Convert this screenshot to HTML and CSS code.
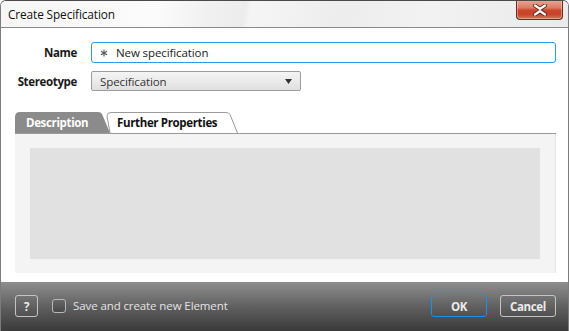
FILE: index.html
```html
<!DOCTYPE html>
<html>
<head>
<meta charset="utf-8">
<link rel="stylesheet" href="styles.css">
</head>
<body>
<div class="window">
  <div class="titlebar">
    <span class="title">Create Specification</span>
    <button class="close" aria-label="Close">
      <svg width="16" height="12" viewBox="0 0 16 12">
        <path d="M3 1.5 L8 5 L13 1.5 M3 10.5 L8 7 L13 10.5" fill="none" stroke="#5a2a22" stroke-width="4" stroke-linecap="round"/>
        <path d="M3 1.5 L8 5 L13 1.5 M3 10.5 L8 7 L13 10.5" fill="none" stroke="#ffffff" stroke-width="2.2" stroke-linecap="round"/>
      </svg>
    </button>
  </div>
  <div class="body">
    <div class="form">
      <label class="label">Name</label>
      <div class="input">
        <svg class="star" width="8" height="8" viewBox="0 0 8 8">
          <path d="M4 0.5 V7.5 M1 2.2 L7 5.8 M7 2.2 L1 5.8" stroke="#555" stroke-width="1.1"/>
        </svg>
        <span>New specification</span>
      </div>
      <label class="label">Stereotype</label>
      <div class="select">
        <span>Specification</span>
        <svg width="7" height="5" viewBox="0 0 7 5"><path d="M0 0 H7 L3.5 5 Z" fill="#333"/></svg>
      </div>
    </div>
    <div class="tabs">
      <div class="tab tab-active">
        <svg class="tab-bg" viewBox="0 0 95 21" preserveAspectRatio="none">
          <path d="M0 21 V5 Q0 0 5 0 H83 Q86 0 87 2 L95 21 Z" fill="#8b8b8b"/>
        </svg>
        <span class="tab-text">Description</span>
      </div>
      <div class="tab tab-idle">
        <svg class="tab-bg" viewBox="0 0 133 21" preserveAspectRatio="none">
          <path d="M5 21 L2 4 Q2 0.5 6 0.5 H121 Q124 0.5 125 2.5 L132.5 21" fill="#ffffff" stroke="#9a9a9a" stroke-width="1"/>
        </svg>
        <span class="tab-text">Further Properties</span>
      </div>
    </div>
    <div class="panel">
      <div class="inner"></div>
    </div>
  </div>
  <div class="footer">
    <button class="btn help">?</button>
    <span class="check"></span>
    <span class="check-label">Save and create new Element</span>
    <div class="spacer"></div>
    <button class="btn ok">OK</button>
    <button class="btn cancel">Cancel</button>
  </div>
</div>
</body>
</html>
```
FILE: styles.css
```css
* { box-sizing: border-box; }
html, body { margin: 0; padding: 0; background: #ffffff; }
body { font-family: "Open Sans", "Noto Sans", sans-serif; font-size: 11.5px; letter-spacing: -0.1px; color: #1a1a1a; }

.window {
  width: 569px;
  height: 331px;
  display: flex;
  flex-direction: column;
  border: 1px solid #7c7c7c;
  border-top-color: #4a4a4a;
  border-bottom: none;
  border-radius: 6px 6px 0 0;
  overflow: hidden;
  background: #fff;
}

.titlebar {
  height: 27px;
  flex: none;
  display: flex;
  align-items: flex-start;
  padding-left: 7px;
  border-bottom: 1px solid #8a8a8a;
  background: linear-gradient(100deg, #f6f6f6 0%, #fbfbfb 28%, #f1f1f1 36%, #ececec 43%, #f5f5f5 44%, #ededed 60%, #f2f2f2 75%, #eaeaea 100%);
}
.title {
  line-height: 26px;
  font-size: 11.8px;
  color: #111;
}
.close {
  margin: -1px 5px 0 auto;
  width: 47px;
  height: 20px;
  padding: 0;
  border: 1px solid #6d2a1e;
  border-top: none;
  border-radius: 0 0 4px 4px;
  background: linear-gradient(#e9a898 0%, #dd7b66 40%, #c9462b 55%, #c5432a 75%, #d8745b 100%);
  display: flex;
  align-items: center;
  justify-content: center;
  box-shadow: inset 0 0 0 1px rgba(255,255,255,0.35);
}
.close svg { display: block; }

.body {
  height: 254px;
  flex: none;
  padding: 14px 12px 0 14px;
  display: flex;
  flex-direction: column;
}

.form {
  display: grid;
  grid-template-columns: 62px 1fr;
  column-gap: 14px;
  row-gap: 8px;
  align-items: center;
}
.label {
  text-align: right;
  font-weight: 700;
  letter-spacing: -0.35px;
  color: #1a1a1a;
}
.input {
  height: 21px;
  border: 1px solid #2f9be6;
  border-radius: 3px;
  display: flex;
  align-items: center;
  padding-left: 8px;
  gap: 8px;
  color: #1a1a1a;
}
.star { display: block; }
.select {
  width: 210px;
  height: 20px;
  border: 1px solid #9c9c9c;
  border-radius: 2px;
  background: linear-gradient(#f5f5f5, #e0e0e0);
  display: flex;
  align-items: center;
  justify-content: space-between;
  padding: 0 8px 0 8px;
  color: #333;
}
.select svg { display: block; }

.tabs {
  margin-top: 21px;
  height: 22px;
  display: flex;
  align-items: stretch;
  border-bottom: 1px solid #9a9a9a;
}
.tab {
  position: relative;
  height: 21px;
  display: flex;
  align-items: center;
  font-weight: 700;
  letter-spacing: -0.35px;
}
.tab-bg {
  position: absolute;
  left: 0; top: 0;
  width: 100%; height: 100%;
}
.tab-text { position: relative; }
.tab-active { width: 95px; padding-left: 11px; color: #fff; z-index: 1; }
.tab-idle { width: 133px; margin-left: -5px; padding-left: 12px; color: #111; }

.panel {
  height: 139px;
  background: #f4f4f4;
  padding: 14px 15px;
  border-right: 1px solid #e6e6e6;
}
.inner {
  height: 100%;
  background: #e1e1e1;
}

.footer {
  flex: 1;
  display: flex;
  align-items: flex-start;
  padding: 13px 12px 0 14px;
  background: linear-gradient(#8e8e8e, #5c5c5c 55%, #3a3a3a);
}
.btn {
  height: 22px;
  border-radius: 3px;
  background: transparent;
  font-family: inherit;
  font-size: 11.5px;
  font-weight: 700;
  letter-spacing: -0.35px;
  color: #ececec;
  padding: 0;
}
.help { width: 23px; border: 1px solid #c4c4c4; }
.check {
  width: 14px;
  height: 14px;
  margin: 4px 0 0 14px;
  border: 1px solid #b8b8b8;
  border-radius: 3px;
  background: linear-gradient(rgba(0,0,0,0.05), rgba(0,0,0,0.15));
}
.check-label {
  margin-left: 7px;
  line-height: 22px;
  color: #e4e4e4;
}
.spacer { flex: 1; }
.ok { width: 56px; border: 1px solid #1f8fdf; }
.cancel { width: 56px; border: 1px solid #c4c4c4; margin-left: 13px; }
```
